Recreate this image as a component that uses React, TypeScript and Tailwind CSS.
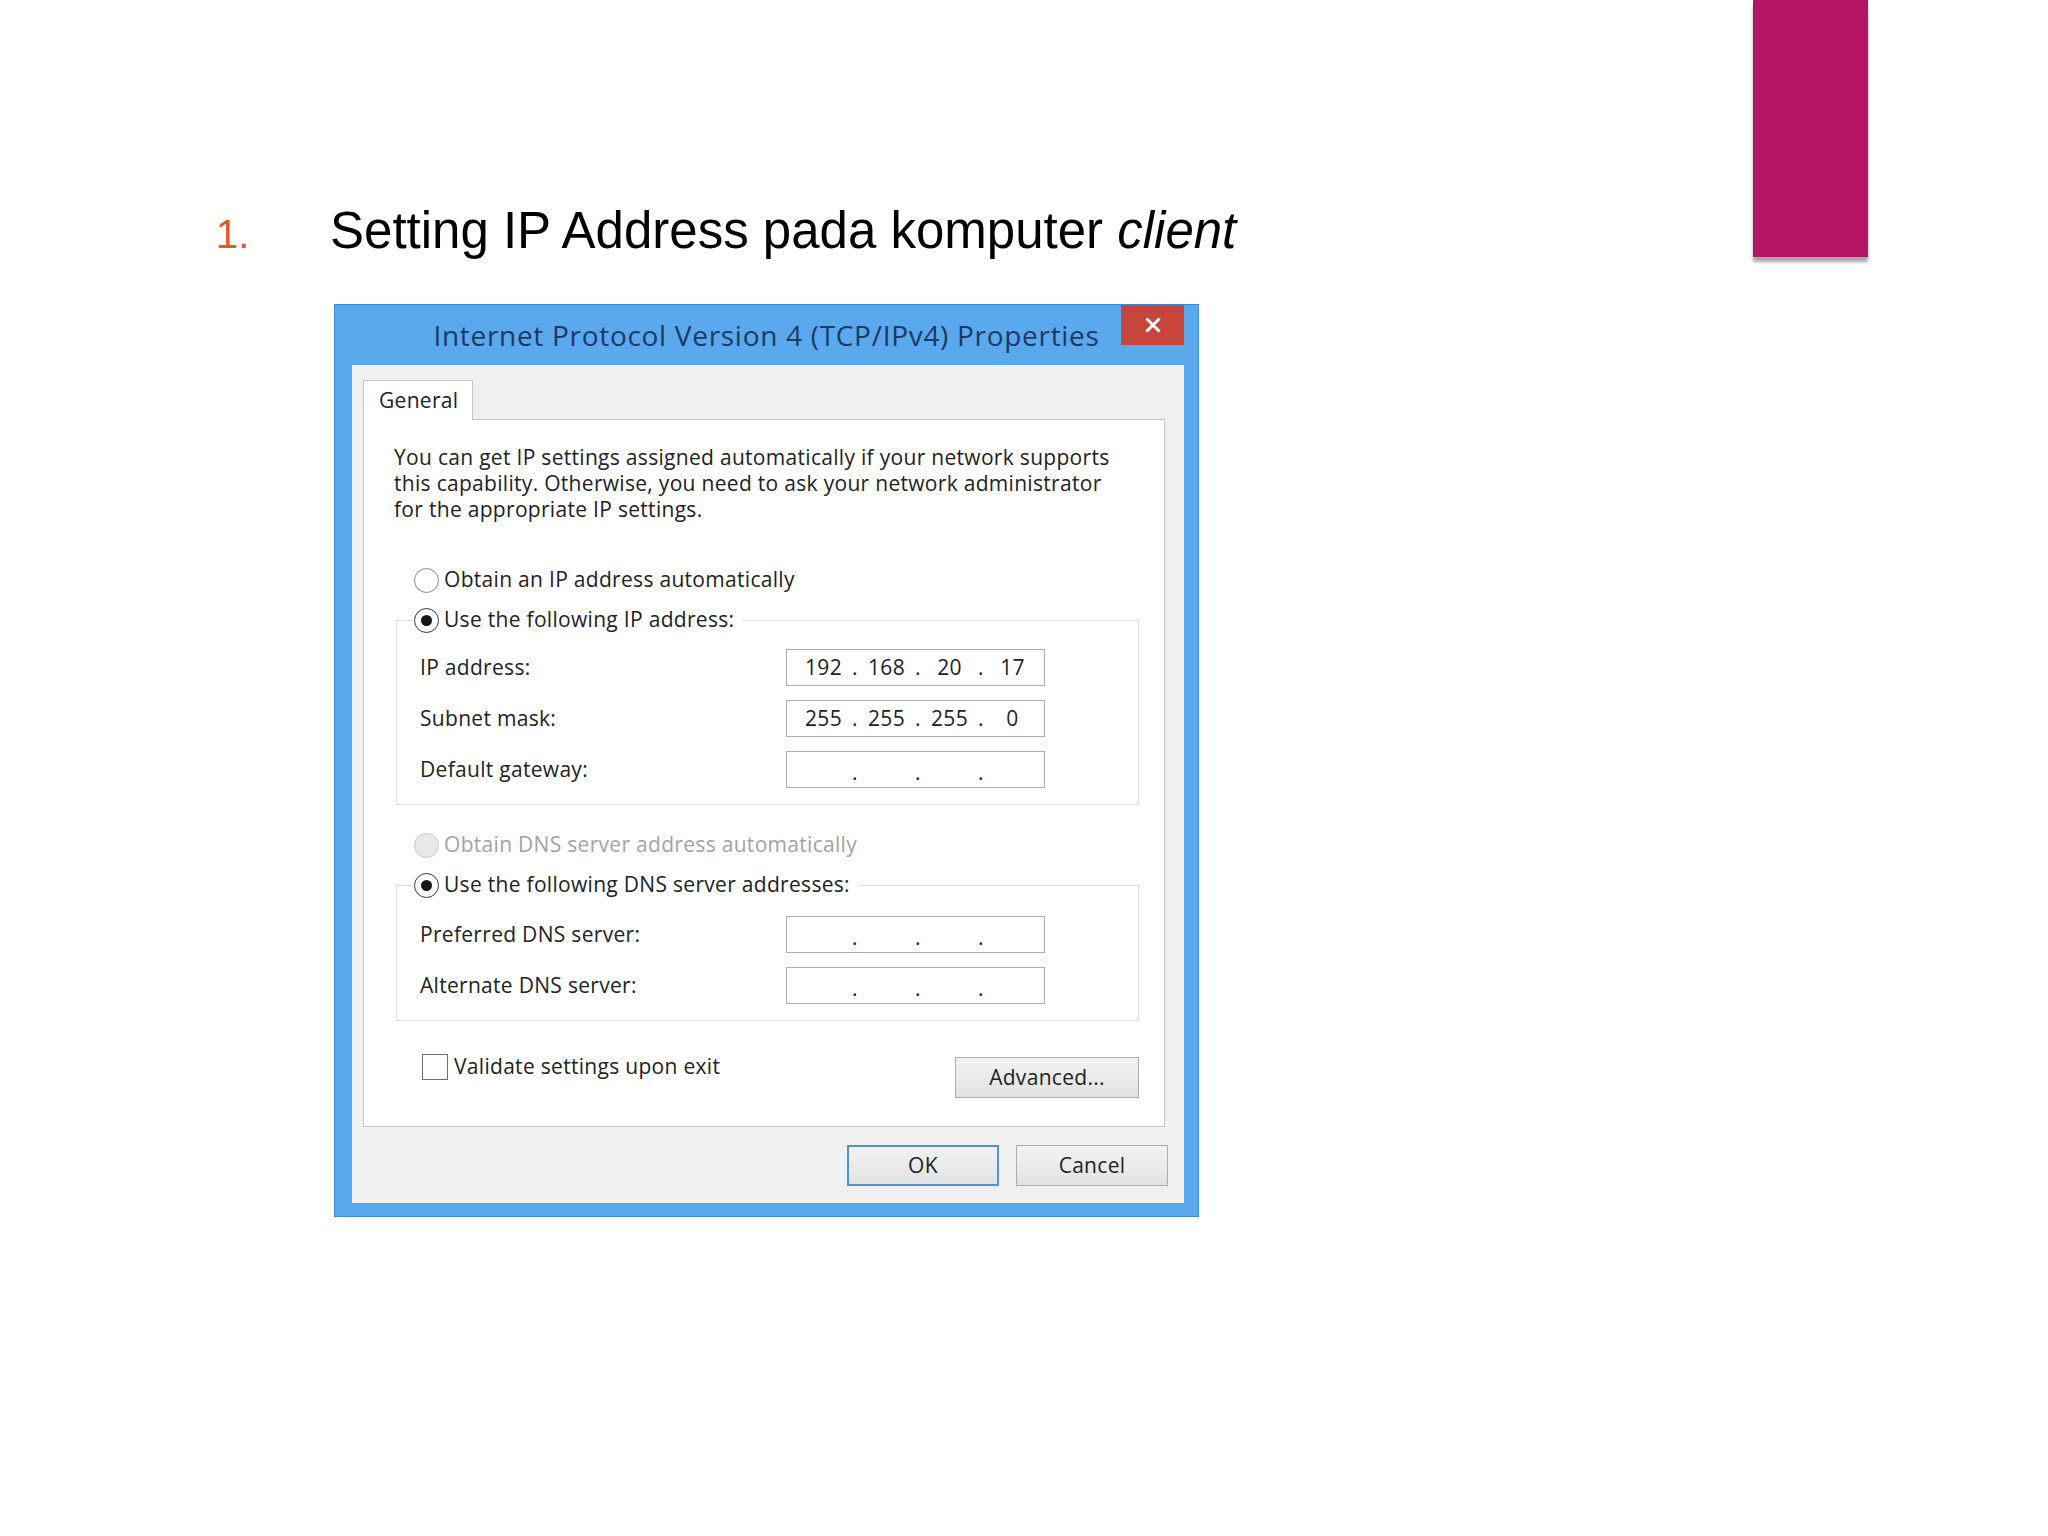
import React from "react"

const dialogFont = { fontFamily: '"Open Sans", "Noto Sans", sans-serif' }

function Radio({ checked, disabled }: { checked?: boolean; disabled?: boolean }) {
  if (disabled) {
    return <span className="w-[25px] h-[25px] shrink-0 rounded-full border border-[#c9c9c9] bg-[#e8e8e8]" />
  }
  return (
    <span
      className={
        "w-[25px] h-[25px] shrink-0 rounded-full border-[1.5px] bg-white flex items-center justify-center " +
        (checked ? "border-[#3a3a3a]" : "border-[#8a8a8a]")
      }
    >
      {checked && <span className="w-[11px] h-[11px] rounded-full bg-[#151515]" />}
    </span>
  )
}

function IpBox({ parts }: { parts?: string[] }) {
  const p = parts || ["", "", "", ""]
  return (
    <div className="w-[259px] h-[37px] border border-[#a9abb0] bg-white flex items-center pl-[9px] text-[#222222]">
      <span className="w-[55px] text-center">{p[0]}</span>
      <span className={"w-[8px] text-center " + (parts ? "" : "pt-[6px]")}>.</span>
      <span className="w-[55px] text-center">{p[1]}</span>
      <span className={"w-[8px] text-center " + (parts ? "" : "pt-[6px]")}>.</span>
      <span className="w-[55px] text-center">{p[2]}</span>
      <span className={"w-[8px] text-center " + (parts ? "" : "pt-[6px]")}>.</span>
      <span className="w-[55px] text-center">{p[3]}</span>
    </div>
  )
}

function FieldRow({ label, parts }: { label: string; parts?: string[] }) {
  return (
    <div className="flex items-center h-[37px]">
      <span className="w-[374px] pl-[8px] text-[#222222]">{label}</span>
      <IpBox parts={parts} />
    </div>
  )
}

function Group({ legend, children, pt }: { legend: string; children: React.ReactNode; pt: string }) {
  return (
    <fieldset className={"ml-[2px] border border-[#dedede] px-[15px] pb-[16px] " + pt}>
      <legend className="px-[2px] bg-white">
        <div className="flex items-center h-[40px] gap-[5px] pr-[6px]">
          <Radio checked />
          <span className="text-[#222222]">{legend}</span>
        </div>
      </legend>
      <div className="flex flex-col gap-[14px]">{children}</div>
    </fieldset>
  )
}

function WinButton({ label, primary, w }: { label: string; primary?: boolean; w: string }) {
  return (
    <div
      className={
        "h-[41px] flex items-center justify-center text-[#222222] bg-gradient-to-b from-[#f2f2f2] to-[#e3e3e3] " +
        w +
        (primary ? " border-2 border-[#4f93cf]" : " border border-[#acacac]")
      }
    >
      {label}
    </div>
  )
}

function Dialog() {
  return (
    <div className="ml-[118px] mt-[48px] w-[865px] border border-[#3f8bd7] bg-[#5aa8ee] flex flex-col" style={dialogFont}>
      <div className="relative h-[60px] flex items-center justify-center">
        <span className="text-[28px] tracking-[0.7px] text-[#1d3a63] whitespace-nowrap">
          Internet Protocol Version 4 (TCP/IPv4) Properties
        </span>
        <div className="absolute right-[14px] top-0 w-[63px] h-[40px] bg-[#c8453b] flex items-center justify-center">
          <svg width="16" height="16" viewBox="0 0 16 16">
            <path d="M2.5 2.5L13.5 13.5M13.5 2.5L2.5 13.5" stroke="#ffffff" strokeWidth="3" strokeLinecap="square" />
          </svg>
        </div>
      </div>

      <div className="ml-[17px] mr-[14px] mb-[13px] bg-[#f0f0f0] pt-[15px] pl-[11px] flex flex-col text-[21px] tracking-[0.3px]">
        <div className="relative z-10 -mb-px w-[110px] h-[40px] bg-white border-t border-l border-r border-[#c6c6c6] pl-[15px] flex items-center text-[#222222]">
          General
        </div>
        <div className="w-[802px] bg-white border border-[#c6c6c6] pl-[30px] pr-[25px] pt-[24px] pb-[28px] flex flex-col">
          <div className="leading-[26px] text-[#222222] whitespace-nowrap">
            You can get IP settings assigned automatically if your network supports
            <br />
            this capability. Otherwise, you need to ask your network administrator
            <br />
            for the appropriate IP settings.
          </div>

          <div className="mt-[38px] ml-[20px] h-[40px] flex items-center gap-[5px]">
            <Radio />
            <span className="text-[#222222]">Obtain an IP address automatically</span>
          </div>

          <Group legend="Use the following IP address:" pt="pt-[9px]">
            <FieldRow label="IP address:" parts={["192", "168", "20", "17"]} />
            <FieldRow label="Subnet mask:" parts={["255", "255", "255", "0"]} />
            <FieldRow label="Default gateway:" />
          </Group>

          <div className="mt-[20px] ml-[20px] h-[40px] flex items-center gap-[5px]">
            <Radio disabled />
            <span className="text-[#a3a3a3]">Obtain DNS server address automatically</span>
          </div>

          <Group legend="Use the following DNS server addresses:" pt="pt-[11px]">
            <FieldRow label="Preferred DNS server:" />
            <FieldRow label="Alternate DNS server:" />
          </Group>

          <div className="mt-[33px] flex items-start">
            <div className="ml-[28px] h-[26px] flex items-center gap-[6px]">
              <span className="w-[26px] h-[26px] border border-[#6f6f6f] bg-white" />
              <span className="text-[#222222]">Validate settings upon exit</span>
            </div>
            <div className="ml-auto mt-[3px]">
              <WinButton label="Advanced..." w="w-[184px]" />
            </div>
          </div>
        </div>

        <div className="mt-[18px] mb-[17px] pr-[16px] flex justify-end gap-[17px]">
          <WinButton label="OK" primary w="w-[152px]" />
          <WinButton label="Cancel" w="w-[152px]" />
        </div>
      </div>
    </div>
  )
}

export default function App() {
  return (
    <div className="w-[2048px] h-[1536px] bg-white flex overflow-hidden">
      <div className="flex flex-col pl-[216px]">
        <div className="mt-[205px] flex items-baseline" style={{ fontFamily: '"Liberation Sans", Arial, sans-serif' }}>
          <span className="w-[114px] text-[40px] leading-[40px] text-[#e2572e]">1.</span>
          <span className="text-[51px] leading-[51px] text-black whitespace-nowrap">
            Setting IP Address pada komputer <i>client</i>
          </span>
        </div>
        <Dialog />
      </div>
      <div className="ml-auto mr-[180px] w-[115px] h-[257px] shrink-0 bg-[#b51462] shadow-[0_5px_3px_rgba(0,0,0,0.35)]" />
    </div>
  )
}
